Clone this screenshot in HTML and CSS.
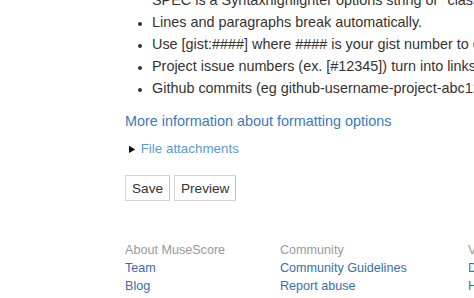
FILE: index.html
```html
<!DOCTYPE html>
<html lang="en">
<head>
    <meta charset="UTF-8">
    <meta name="viewport" content="width=device-width, initial-scale=1.0">
    <title>Comment formatting</title>
    <link rel="stylesheet" href="styles.css">
</head>
<body>
    <div class="page">
        <ul class="tips">
            <li class="cont">SPEC is a Syntaxhighlighter options string or "class="brush:SPEC"".</li>
            <li>Lines and paragraphs break automatically.</li>
            <li>Use [gist:####] where #### is your gist number to embed the gist.</li>
            <li>Project issue numbers (ex. [#12345]) turn into links automatically.</li>
            <li>Github commits (eg github-username-project-abc1234) turn into links.</li>
        </ul>

        <p class="more"><a href="#">More information about formatting options</a></p>

        <details class="attach">
            <summary><a href="#">File attachments</a></summary>
        </details>

        <div class="actions">
            <button type="submit">Save</button>
            <button type="submit">Preview</button>
        </div>

        <footer class="site-footer">
            <div class="col">
                <h4>About MuseScore</h4>
                <a href="#">Team</a>
                <a href="#">Blog</a>
            </div>
            <div class="col">
                <h4>Community</h4>
                <a href="#">Community Guidelines</a>
                <a href="#">Report abuse</a>
            </div>
            <div class="col">
                <h4>Version</h4>
                <a href="#">Download</a>
                <a href="#">Handbook</a>
            </div>
        </footer>
    </div>
</body>
</html>
```

FILE: styles.css
```css
/* Comment form bottom + footer */
body {
    font-family: "Liberation Sans", Arial, sans-serif;
    background-color: #ffffff;
    color: #333333;
    margin: 0;
    padding: 0;
    overflow: hidden;
}

.page {
    padding-left: 125px;
    white-space: nowrap;
}

a {
    color: #3b78c0;
    text-decoration: none;
}

.tips {
    margin: -11px 0 0 0;
    padding-left: 27px;
    font-size: 14.4px;
    line-height: 22px;
}

.tips li.cont {
    list-style: none;
}

.tips li::marker {
    font-size: 12px;
}

.more {
    margin: 12px 0 0 0;
    font-size: 14.4px;
    line-height: 20px;
}

.attach {
    margin-top: 10px;
    padding-left: 4px;
    font-size: 13.4px;
    line-height: 16px;
}

.attach summary {
    cursor: pointer;
}

.attach summary::marker {
    color: #111111;
    font-size: 11px;
}

.attach a {
    color: #5a9ad8;
}

.actions {
    display: flex;
    gap: 4px;
    margin-top: 18px;
}

.actions button {
    font-family: "Liberation Sans", Arial, sans-serif;
    font-size: 13.6px;
    color: #333333;
    background-color: #ffffff;
    border: 1px solid #d4d4d4;
    border-right-color: #c4c4c4;
    padding: 0 6px;
    height: 26px;
}

.site-footer {
    display: grid;
    grid-template-columns: 155px 188px auto;
    margin-top: 40px;
    font-size: 12.6px;
    line-height: 18px;
}

.site-footer .col {
    display: flex;
    flex-direction: column;
}

.site-footer h4 {
    margin: 0;
    font-weight: normal;
    color: #9a9a9a;
}

.site-footer a {
    color: #3a6db0;
}
```
